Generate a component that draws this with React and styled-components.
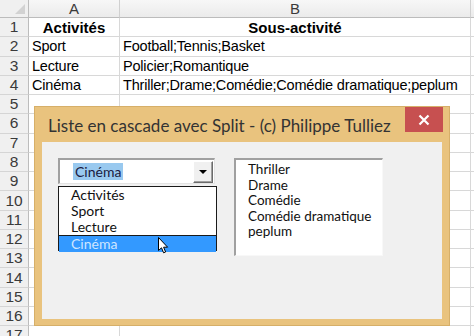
import React from "react";
import styled, { createGlobalStyle } from "styled-components";

const Global = createGlobalStyle`
  html, body { margin: 0; padding: 0; background: #ffffff; }
  body { width: 474px; height: 336px; overflow: hidden; }
`;

const Page = styled.div`
  position: relative;
  width: 474px;
  height: 336px;
  overflow: hidden;
  background: #fff;
`;

const Sheet = styled.div`
  display: grid;
  grid-template-columns: 29px 91px 351px 40px;
  grid-template-rows: 18px repeat(17, 19.27px);
  font-family: "Liberation Sans", Arial, sans-serif;
  font-size: 14.5px;
  color: #000;
`;

const Corner = styled.div`
  position: relative;
  background: #f0f0f0;
  border-right: 1px solid #bcbcbc;
  border-bottom: 1px solid #bcbcbc;
  box-sizing: border-box;
  &::after {
    content: "";
    position: absolute;
    right: 3px;
    bottom: 3px;
    border-left: 10px solid transparent;
    border-bottom: 10px solid #d2d2d2;
  }
`;

const ColHead = styled.div`
  display: flex;
  align-items: center;
  justify-content: center;
  background: linear-gradient(#f7f7f7, #ebebeb);
  border-right: 1px solid #d0d0d0;
  border-bottom: 1px solid #bcbcbc;
  box-sizing: border-box;
  color: #3a3a3a;
  font-size: 15px;
`;

const RowHead = styled.div`
  display: flex;
  align-items: center;
  justify-content: center;
  background: #f0f0f0;
  border-right: 1px solid #bcbcbc;
  border-bottom: 1px solid #d5d5d5;
  box-sizing: border-box;
  color: #3a3a3a;
  font-size: 15.5px;
`;

const Cell = styled.div`
  display: flex;
  align-items: center;
  justify-content: ${(p) => (p.$center ? "center" : "flex-start")};
  padding: 0 3px;
  border-right: 1px solid #d8d8d8;
  border-bottom: 1px solid #d8d8d8;
  box-sizing: border-box;
  font-weight: ${(p) => (p.$bold ? 700 : 400)};
  font-size: ${(p) => (p.$bold ? "15px" : "14.5px")};
  letter-spacing: ${(p) => (p.$bold ? "0" : "-0.2px")};
  white-space: nowrap;
  overflow: visible;
`;

const Dialog = styled.div`
  position: absolute;
  left: 34px;
  top: 106px;
  width: 416px;
  height: 220px;
  box-sizing: border-box;
  background: #e9c37e;
  border: 1px solid #d6af69;
  display: flex;
  flex-direction: column;
  padding: 0 7px 6px 7px;
`;

const TitleBar = styled.div`
  height: 35px;
  display: flex;
  align-items: flex-start;
  justify-content: space-between;
`;

const Title = styled.div`
  font-family: "Lato", "Noto Sans", sans-serif;
  font-size: 17px;
  color: #333;
  padding: 8px 0 0 6px;
  white-space: nowrap;
`;

const CloseBtn = styled.div`
  width: 38px;
  height: 25px;
  margin-right: -1px;
  background: #c75050;
  display: flex;
  align-items: center;
  justify-content: center;
`;

const Client = styled.div`
  flex: 1;
  background: #f0f0f0;
  display: flex;
  align-items: flex-start;
  padding: 16px;
  gap: 17px;
  font-family: "Lato", "Noto Sans", sans-serif;
  font-size: 14px;
  color: #111;
`;

const ComboWrap = styled.div`
  position: relative;
  width: 159px;
`;

const Combo = styled.div`
  height: 26px;
  box-sizing: border-box;
  background: #fff;
  border-top: 2px solid #a0a0a0;
  border-left: 2px solid #a0a0a0;
  border-right: 1px solid #e3e3e3;
  border-bottom: 1px solid #e3e3e3;
  display: flex;
  align-items: center;
  padding-left: 13px;
  width: 157px;
`;

const Selected = styled.span`
  background: #99c9ef;
  color: #1a1a40;
  padding: 0 2px;
  line-height: 17px;
`;

const ArrowBtn = styled.div`
  margin-left: auto;
  margin-right: 1px;
  width: 20px;
  height: 22px;
  box-sizing: border-box;
  background: #f0f0f0;
  border-top: 1px solid #fff;
  border-left: 1px solid #fff;
  border-right: 1px solid #6b6b6b;
  border-bottom: 1px solid #6b6b6b;
  box-shadow: inset -1px -1px 0 #a0a0a0;
  display: flex;
  align-items: center;
  justify-content: center;
  &::after {
    content: "";
    border-left: 4px solid transparent;
    border-right: 4px solid transparent;
    border-top: 4px solid #000;
  }
`;

const DropList = styled.div`
  position: absolute;
  left: 0;
  top: 28px;
  width: 159px;
  height: 65px;
  box-sizing: border-box;
  background: #fff;
  border: 1px solid #1a1a1a;
  display: flex;
  flex-direction: column;
`;

const DropItem = styled.div`
  height: 16px;
  line-height: 16px;
  padding-left: 12px;
  background: ${(p) => (p.$active ? "#3399ff" : "transparent")};
  color: ${(p) => (p.$active ? "#cfe6ff" : "#111")};
  border-top: ${(p) => (p.$active ? "1px solid #1a1a1a" : "none")};
  margin-top: ${(p) => (p.$active ? "auto" : "0")};
`;

const ListBox = styled.div`
  width: 149px;
  height: 98px;
  box-sizing: border-box;
  background: #fff;
  border-top: 2px solid #a0a0a0;
  border-left: 2px solid #a0a0a0;
  border-right: 1px solid #f8f8f8;
  border-bottom: 1px solid #f8f8f8;
  padding: 2px 0 0 12px;
  display: flex;
  flex-direction: column;
  font-size: 13.5px;
`;

const ListItem = styled.div`
  height: 15.5px;
  line-height: 15.5px;
  white-space: nowrap;
`;

const Cursor = styled.svg`
  position: absolute;
  left: 158px;
  top: 237px;
`;

const rows = [
  ["Activités", "Sous-activité", true],
  ["Sport", "Football;Tennis;Basket"],
  ["Lecture", "Policier;Romantique"],
  ["Cinéma", "Thriller;Drame;Comédie;Comédie dramatique;peplum"],
];

export default function App() {
  const cells = [];
  cells.push(<Corner key="c" />);
  cells.push(<ColHead key="ha">A</ColHead>);
  cells.push(<ColHead key="hb">B</ColHead>);
  cells.push(<ColHead key="hc" />);
  for (let i = 1; i <= 17; i++) {
    const r = rows[i - 1];
    cells.push(<RowHead key={"r" + i}>{i}</RowHead>);
    cells.push(
      <Cell key={"a" + i} $bold={r && r[2]} $center={r && r[2]}>
        {r ? r[0] : ""}
      </Cell>
    );
    cells.push(
      <Cell key={"b" + i} $bold={r && r[2]} $center={r && r[2]}>
        {r ? r[1] : ""}
      </Cell>
    );
    cells.push(<Cell key={"x" + i} />);
  }
  return (
    <Page>
      <Global />
      <Sheet>{cells}</Sheet>
      <Dialog>
        <TitleBar>
          <Title>Liste en cascade avec Split - (c) Philippe Tulliez</Title>
          <CloseBtn>
            <svg width="12" height="12" viewBox="0 0 12 12">
              <path d="M1.5 1.5 L10.5 10.5 M10.5 1.5 L1.5 10.5" stroke="#fff" strokeWidth="2.2" />
            </svg>
          </CloseBtn>
        </TitleBar>
        <Client>
          <ComboWrap>
            <Combo>
              <Selected>Cinéma</Selected>
              <ArrowBtn />
            </Combo>
            <DropList>
              <DropItem>Activités</DropItem>
              <DropItem>Sport</DropItem>
              <DropItem>Lecture</DropItem>
              <DropItem $active>Cinéma</DropItem>
            </DropList>
          </ComboWrap>
          <ListBox>
            <ListItem>Thriller</ListItem>
            <ListItem>Drame</ListItem>
            <ListItem>Comédie</ListItem>
            <ListItem>Comédie dramatique</ListItem>
            <ListItem>peplum</ListItem>
          </ListBox>
        </Client>
      </Dialog>
      <Cursor width="12" height="18" viewBox="0 0 12 18">
        <path d="M0.5 0.5 L0.5 13.5 L3.5 10.8 L5.6 15.8 L7.6 15 L5.6 10.2 L9.6 10.2 Z" fill="#fff" stroke="#000" strokeWidth="1" strokeLinejoin="round" />
      </Cursor>
    </Page>
  );
}
